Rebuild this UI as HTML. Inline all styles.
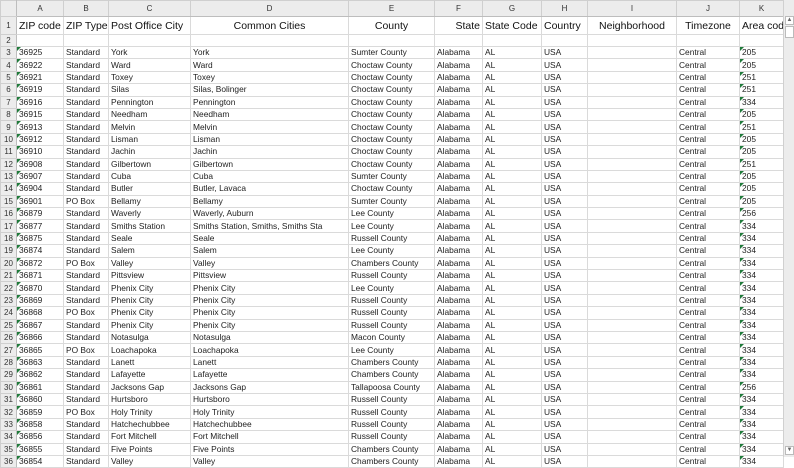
<!DOCTYPE html>
<html><head><meta charset="utf-8"><style>
*{margin:0;padding:0;box-sizing:border-box}
body{width:794px;height:457px;overflow:hidden;background:#fff;font-family:"Liberation Sans",Arial,sans-serif;position:relative}
table{border-collapse:collapse;table-layout:fixed;position:absolute;left:0;top:0;width:783px}
td{border:1px solid #dadada;font-size:8.4px;color:#222;white-space:nowrap;overflow:hidden;padding:0 2px;height:12.4px;line-height:11px}
tr.ch td{height:16px;background:#ececec;text-align:center;font-size:8px;color:#333;border-color:#cfcfcf;border-bottom:1px solid #bdbdbd}
tr.h1 td{height:18px;font-size:10.5px;color:#111;line-height:16px}
tr.h2 td{height:11px}
tr td.rh{background:#ececec;text-align:center;font-size:8px;color:#333;padding:0;border-color:#cfcfcf;border-right:1px solid #bdbdbd}
td.z{position:relative}
td.z:before{content:"";position:absolute;left:0;top:0;border-top:4px solid #1f7a3a;border-right:4px solid transparent}
.c{text-align:center}
.sb{position:absolute;left:783px;top:0;width:11px;height:457px;background:#ececec;border-left:1px solid #d0d0d0}
.sb .u{position:absolute;left:1px;top:16px;width:9px;height:9px;background:#fff;border:1px solid #bbb;font-size:6px;text-align:center;line-height:7px;color:#666}
.sb .t{position:absolute;left:1px;top:26px;width:9px;height:12px;background:#fff;border:1px solid #bbb}
.sb .d{position:absolute;left:1px;top:446px;width:9px;height:9px;background:#fff;border:1px solid #bbb;font-size:6px;text-align:center;line-height:7px;color:#666}
</style></head><body>
<table>
<colgroup><col style="width:16px"><col style="width:47px"><col style="width:45px"><col style="width:82px"><col style="width:158px"><col style="width:86px"><col style="width:48px"><col style="width:59px"><col style="width:46px"><col style="width:89px"><col style="width:63px"><col style="width:44px"></colgroup>
<tr class="ch"><td class="rh"></td><td>A</td><td>B</td><td>C</td><td>D</td><td>E</td><td>F</td><td>G</td><td>H</td><td>I</td><td>J</td><td>K</td></tr>
<tr class="h1"><td class="rh">1</td><td>ZIP code</td><td>ZIP Type</td><td>Post Office City</td><td class="c">Common Cities</td><td class="c">County</td><td style="text-align:right">State</td><td>State Code</td><td>Country</td><td class="c">Neighborhood</td><td class="c">Timezone</td><td>Area code</td></tr>
<tr class="h2"><td class="rh">2</td><td></td><td></td><td></td><td></td><td></td><td></td><td></td><td></td><td></td><td></td><td></td></tr>
<tr><td class="rh">3</td><td class="z">36925</td><td>Standard</td><td>York</td><td>York</td><td>Sumter County</td><td>Alabama</td><td>AL</td><td>USA</td><td></td><td>Central</td><td class="z">205</td></tr>
<tr><td class="rh">4</td><td class="z">36922</td><td>Standard</td><td>Ward</td><td>Ward</td><td>Choctaw County</td><td>Alabama</td><td>AL</td><td>USA</td><td></td><td>Central</td><td class="z">205</td></tr>
<tr><td class="rh">5</td><td class="z">36921</td><td>Standard</td><td>Toxey</td><td>Toxey</td><td>Choctaw County</td><td>Alabama</td><td>AL</td><td>USA</td><td></td><td>Central</td><td class="z">251</td></tr>
<tr><td class="rh">6</td><td class="z">36919</td><td>Standard</td><td>Silas</td><td>Silas, Bolinger</td><td>Choctaw County</td><td>Alabama</td><td>AL</td><td>USA</td><td></td><td>Central</td><td class="z">251</td></tr>
<tr><td class="rh">7</td><td class="z">36916</td><td>Standard</td><td>Pennington</td><td>Pennington</td><td>Choctaw County</td><td>Alabama</td><td>AL</td><td>USA</td><td></td><td>Central</td><td class="z">334</td></tr>
<tr><td class="rh">8</td><td class="z">36915</td><td>Standard</td><td>Needham</td><td>Needham</td><td>Choctaw County</td><td>Alabama</td><td>AL</td><td>USA</td><td></td><td>Central</td><td class="z">205</td></tr>
<tr><td class="rh">9</td><td class="z">36913</td><td>Standard</td><td>Melvin</td><td>Melvin</td><td>Choctaw County</td><td>Alabama</td><td>AL</td><td>USA</td><td></td><td>Central</td><td class="z">251</td></tr>
<tr><td class="rh">10</td><td class="z">36912</td><td>Standard</td><td>Lisman</td><td>Lisman</td><td>Choctaw County</td><td>Alabama</td><td>AL</td><td>USA</td><td></td><td>Central</td><td class="z">205</td></tr>
<tr><td class="rh">11</td><td class="z">36910</td><td>Standard</td><td>Jachin</td><td>Jachin</td><td>Choctaw County</td><td>Alabama</td><td>AL</td><td>USA</td><td></td><td>Central</td><td class="z">205</td></tr>
<tr><td class="rh">12</td><td class="z">36908</td><td>Standard</td><td>Gilbertown</td><td>Gilbertown</td><td>Choctaw County</td><td>Alabama</td><td>AL</td><td>USA</td><td></td><td>Central</td><td class="z">251</td></tr>
<tr><td class="rh">13</td><td class="z">36907</td><td>Standard</td><td>Cuba</td><td>Cuba</td><td>Sumter County</td><td>Alabama</td><td>AL</td><td>USA</td><td></td><td>Central</td><td class="z">205</td></tr>
<tr><td class="rh">14</td><td class="z">36904</td><td>Standard</td><td>Butler</td><td>Butler, Lavaca</td><td>Choctaw County</td><td>Alabama</td><td>AL</td><td>USA</td><td></td><td>Central</td><td class="z">205</td></tr>
<tr><td class="rh">15</td><td class="z">36901</td><td>PO Box</td><td>Bellamy</td><td>Bellamy</td><td>Sumter County</td><td>Alabama</td><td>AL</td><td>USA</td><td></td><td>Central</td><td class="z">205</td></tr>
<tr><td class="rh">16</td><td class="z">36879</td><td>Standard</td><td>Waverly</td><td>Waverly, Auburn</td><td>Lee County</td><td>Alabama</td><td>AL</td><td>USA</td><td></td><td>Central</td><td class="z">256</td></tr>
<tr><td class="rh">17</td><td class="z">36877</td><td>Standard</td><td>Smiths Station</td><td>Smiths Station, Smiths, Smiths Sta</td><td>Lee County</td><td>Alabama</td><td>AL</td><td>USA</td><td></td><td>Central</td><td class="z">334</td></tr>
<tr><td class="rh">18</td><td class="z">36875</td><td>Standard</td><td>Seale</td><td>Seale</td><td>Russell County</td><td>Alabama</td><td>AL</td><td>USA</td><td></td><td>Central</td><td class="z">334</td></tr>
<tr><td class="rh">19</td><td class="z">36874</td><td>Standard</td><td>Salem</td><td>Salem</td><td>Lee County</td><td>Alabama</td><td>AL</td><td>USA</td><td></td><td>Central</td><td class="z">334</td></tr>
<tr><td class="rh">20</td><td class="z">36872</td><td>PO Box</td><td>Valley</td><td>Valley</td><td>Chambers County</td><td>Alabama</td><td>AL</td><td>USA</td><td></td><td>Central</td><td class="z">334</td></tr>
<tr><td class="rh">21</td><td class="z">36871</td><td>Standard</td><td>Pittsview</td><td>Pittsview</td><td>Russell County</td><td>Alabama</td><td>AL</td><td>USA</td><td></td><td>Central</td><td class="z">334</td></tr>
<tr><td class="rh">22</td><td class="z">36870</td><td>Standard</td><td>Phenix City</td><td>Phenix City</td><td>Lee County</td><td>Alabama</td><td>AL</td><td>USA</td><td></td><td>Central</td><td class="z">334</td></tr>
<tr><td class="rh">23</td><td class="z">36869</td><td>Standard</td><td>Phenix City</td><td>Phenix City</td><td>Russell County</td><td>Alabama</td><td>AL</td><td>USA</td><td></td><td>Central</td><td class="z">334</td></tr>
<tr><td class="rh">24</td><td class="z">36868</td><td>PO Box</td><td>Phenix City</td><td>Phenix City</td><td>Russell County</td><td>Alabama</td><td>AL</td><td>USA</td><td></td><td>Central</td><td class="z">334</td></tr>
<tr><td class="rh">25</td><td class="z">36867</td><td>Standard</td><td>Phenix City</td><td>Phenix City</td><td>Russell County</td><td>Alabama</td><td>AL</td><td>USA</td><td></td><td>Central</td><td class="z">334</td></tr>
<tr><td class="rh">26</td><td class="z">36866</td><td>Standard</td><td>Notasulga</td><td>Notasulga</td><td>Macon County</td><td>Alabama</td><td>AL</td><td>USA</td><td></td><td>Central</td><td class="z">334</td></tr>
<tr><td class="rh">27</td><td class="z">36865</td><td>PO Box</td><td>Loachapoka</td><td>Loachapoka</td><td>Lee County</td><td>Alabama</td><td>AL</td><td>USA</td><td></td><td>Central</td><td class="z">334</td></tr>
<tr><td class="rh">28</td><td class="z">36863</td><td>Standard</td><td>Lanett</td><td>Lanett</td><td>Chambers County</td><td>Alabama</td><td>AL</td><td>USA</td><td></td><td>Central</td><td class="z">334</td></tr>
<tr><td class="rh">29</td><td class="z">36862</td><td>Standard</td><td>Lafayette</td><td>Lafayette</td><td>Chambers County</td><td>Alabama</td><td>AL</td><td>USA</td><td></td><td>Central</td><td class="z">334</td></tr>
<tr><td class="rh">30</td><td class="z">36861</td><td>Standard</td><td>Jacksons Gap</td><td>Jacksons Gap</td><td>Tallapoosa County</td><td>Alabama</td><td>AL</td><td>USA</td><td></td><td>Central</td><td class="z">256</td></tr>
<tr><td class="rh">31</td><td class="z">36860</td><td>Standard</td><td>Hurtsboro</td><td>Hurtsboro</td><td>Russell County</td><td>Alabama</td><td>AL</td><td>USA</td><td></td><td>Central</td><td class="z">334</td></tr>
<tr><td class="rh">32</td><td class="z">36859</td><td>PO Box</td><td>Holy Trinity</td><td>Holy Trinity</td><td>Russell County</td><td>Alabama</td><td>AL</td><td>USA</td><td></td><td>Central</td><td class="z">334</td></tr>
<tr><td class="rh">33</td><td class="z">36858</td><td>Standard</td><td>Hatchechubbee</td><td>Hatchechubbee</td><td>Russell County</td><td>Alabama</td><td>AL</td><td>USA</td><td></td><td>Central</td><td class="z">334</td></tr>
<tr><td class="rh">34</td><td class="z">36856</td><td>Standard</td><td>Fort Mitchell</td><td>Fort Mitchell</td><td>Russell County</td><td>Alabama</td><td>AL</td><td>USA</td><td></td><td>Central</td><td class="z">334</td></tr>
<tr><td class="rh">35</td><td class="z">36855</td><td>Standard</td><td>Five Points</td><td>Five Points</td><td>Chambers County</td><td>Alabama</td><td>AL</td><td>USA</td><td></td><td>Central</td><td class="z">334</td></tr>
<tr><td class="rh">36</td><td class="z">36854</td><td>Standard</td><td>Valley</td><td>Valley</td><td>Chambers County</td><td>Alabama</td><td>AL</td><td>USA</td><td></td><td>Central</td><td class="z">334</td></tr>
</table>
<div class="sb"><div class="u">▲</div><div class="t"></div><div class="d">▼</div></div>
</body></html>
